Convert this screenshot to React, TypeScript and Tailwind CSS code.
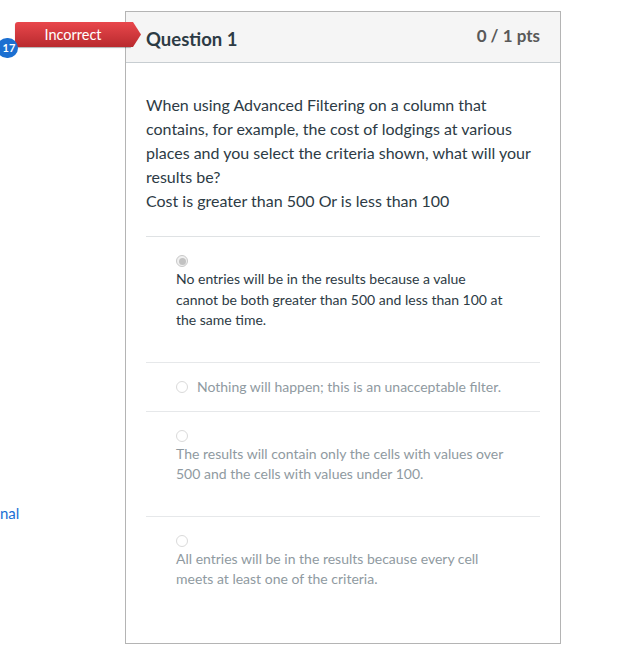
import React from 'react'

interface Answer {
  text: string
  selected?: boolean
  inline?: boolean
}

const answers: Answer[] = [
  {
    text: 'No entries will be in the results because a value cannot be both greater than 500 and less than 100 at the same time.',
    selected: true,
  },
  { text: 'Nothing will happen; this is an unacceptable filter.', inline: true },
  { text: 'The results will contain only the cells with values over 500 and the cells with values under 100.' },
  { text: 'All entries will be in the results because every cell meets at least one of the criteria.' },
]

function Radio({ checked }: { checked?: boolean }) {
  return checked ? (
    <span className="flex h-[12px] w-[12px] items-center justify-center rounded-full border border-[#c9c9c9] bg-[#f0f0f0]">
      <span className="h-[7px] w-[7px] rounded-full bg-[#c2c2c2]" />
    </span>
  ) : (
    <span className="block h-[12px] w-[12px] rounded-full border border-[#dadada] bg-white" />
  )
}

function AnswerRow({ answer }: { answer: Answer }) {
  const color = answer.selected ? 'text-[#2d3b45]' : 'text-[#8f9aa1]'
  if (answer.inline) {
    return (
      <div className="flex items-center gap-[9px] py-[14px] pl-[30px]">
        <Radio />
        <span className={`text-[14px] leading-[20px] ${color}`}>{answer.text}</span>
      </div>
    )
  }
  return (
    <div className="pl-[30px] pt-[16px] pb-[31px]">
      <div className="h-[16px] pt-[2px]">
        <Radio checked={answer.selected} />
      </div>
      <p className={`w-[333px] text-[14px] leading-[20.5px] ${color}`}>{answer.text}</p>
    </div>
  )
}

export default function App() {
  return (
    <div className="relative flex h-[647px] w-[622px] bg-white" style={{ fontFamily: 'Lato, "Open Sans", sans-serif' }}>
      <div className="w-[125px] shrink-0">
        <div className="mt-[503px] text-[15px] leading-[20px] text-[#1a6fd4]">nal</div>
      </div>

      <div className="mt-[11px] flex h-[633px] w-[436px] flex-col border border-[#b4b4b4]">
        <div className="flex h-[51px] items-center justify-between border-b border-[#c7cdd1] bg-[#f5f5f5] pl-[20px] pr-[20px] pt-[6px]">
          <span className="text-[18.5px] font-bold text-[#2d3b45]">Question 1</span>
          <span className="mb-[9px] text-[17px] font-bold text-[#595959]">0 / 1 pts</span>
        </div>

        <div className="px-[20px] pt-[30px]">
          <p className="pb-[23px] text-[16px] leading-[24px] text-[#2d3b45]">
            When using Advanced Filtering on a column that contains, for example, the cost of lodgings at various places and
            you select the criteria shown, what will your results be?
            <br />
            Cost is greater than 500 Or is less than 100
          </p>

          <div className="border-t border-[#dfe2e4]">
            {answers.map((a, i) => (
              <div key={i} className={i > 0 ? 'border-t border-[#e6e8ea]' : ''}>
                <AnswerRow answer={a} />
              </div>
            ))}
          </div>
        </div>
      </div>

      {/* incorrect flag */}
      <div className="absolute left-[15px] top-[22px] flex h-[25px]">
        <div className="flex w-[116px] items-center justify-center rounded-l-[3px] bg-gradient-to-b from-[#e9474c] to-[#b92a2e] text-[14.5px] text-white shadow-[0_1px_1px_rgba(0,0,0,0.3)]">
          Incorrect
        </div>
        <svg width="10" height="25" viewBox="0 0 10 25" className="block">
          <defs>
            <linearGradient id="fl" x1="0" y1="0" x2="0" y2="1">
              <stop offset="0" stopColor="#e9474c" />
              <stop offset="1" stopColor="#b92a2e" />
            </linearGradient>
          </defs>
          <path d="M0 0 L2 0 L10 12.5 L2 25 L0 25 Z" fill="url(#fl)" />
        </svg>
      </div>

      {/* question number */}
      <div className="absolute left-[-3px] top-[38px] flex h-[20px] w-[21px] items-center justify-center rounded-full bg-[#1b6fd1] pl-[3px] text-[11px] font-bold text-white">
        17
      </div>
    </div>
  )
}
